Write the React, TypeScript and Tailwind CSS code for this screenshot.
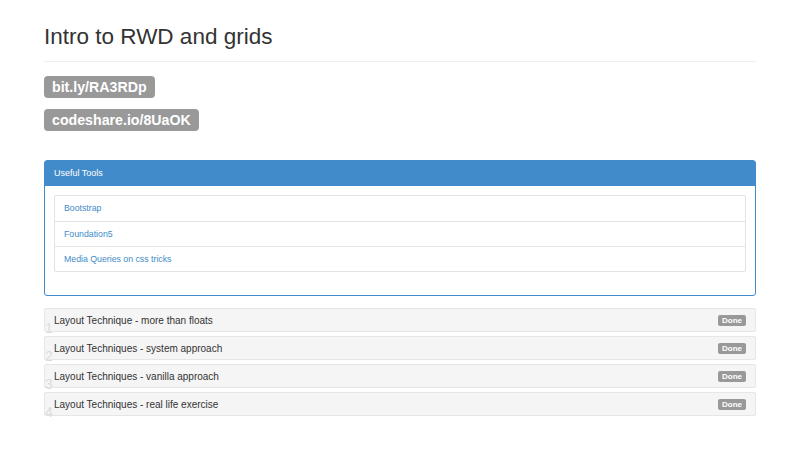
import React from "react";

const rows = [
  "Layout Technique - more than floats",
  "Layout Techniques - system approach",
  "Layout Techniques - vanilla approach",
  "Layout Techniques - real life exercise",
];

const links = ["Bootstrap", "Foundation5", "Media Queries on css tricks"];

export default function App() {
  return (
    <div
      className="min-h-[450px] w-[800px] bg-white text-[#333]"
      style={{ fontFamily: '"Liberation Sans", Arial, sans-serif' }}
    >
      <div className="mx-[44px] w-[712px] pt-[22px]">
        <h1 className="text-[22.5px] leading-[30px] font-normal text-[#333] pb-[9px] border-b border-[#eee]">
          Intro to RWD and grids
        </h1>
        <div className="mt-[14px] flex flex-col items-start gap-[11px]">
          <span className="inline-block rounded-[4px] bg-[#999] px-[8px] h-[22px] leading-[22px] text-[14.2px] font-bold text-white">
            bit.ly/RA3RDp
          </span>
          <span className="inline-block rounded-[4px] bg-[#999] px-[8px] h-[22px] leading-[22px] text-[14.2px] font-bold text-white">
            codeshare.io/8UaOK
          </span>
        </div>

        <div className="mt-[29px] rounded-[3px] border border-[#428bca]">
          <div className="h-[25px] bg-[#428bca] px-[9px] text-[9px] leading-[25px] text-white">
            Useful Tools
          </div>
          <div className="px-[9px] pt-[9px] pb-[23px]">
            <div className="rounded-[2px] border border-[#e3e3e3]">
              {links.map((l, i) => (
                <div
                  key={l}
                  className={`h-[25px] px-[9px] text-[8.75px] leading-[25px] text-[#428bca] ${i > 0 ? "border-t border-[#e3e3e3]" : ""}`}
                >
                  {l}
                </div>
              ))}
            </div>
          </div>
        </div>

        <div className="mt-[12px] flex flex-col gap-[4px]">
          {rows.map((r, i) => (
            <div
              key={r}
              className="relative flex h-[24px] items-center justify-between rounded-[2px] border border-[#e6e6e6] bg-[#f5f5f5] pl-[9px] pr-[9px]"
            >
              <span className="text-[10px] text-[#333]">{r}</span>
              <span className="rounded-[2px] bg-[#999] px-[4px] text-[8px] font-bold leading-[11px] text-white">
                Done
              </span>
              <span className="absolute left-[0px] top-[12px] text-[14px] leading-[14px] text-[#dcdcdc]">
                {i + 1}
              </span>
            </div>
          ))}
        </div>
      </div>
    </div>
  );
}
